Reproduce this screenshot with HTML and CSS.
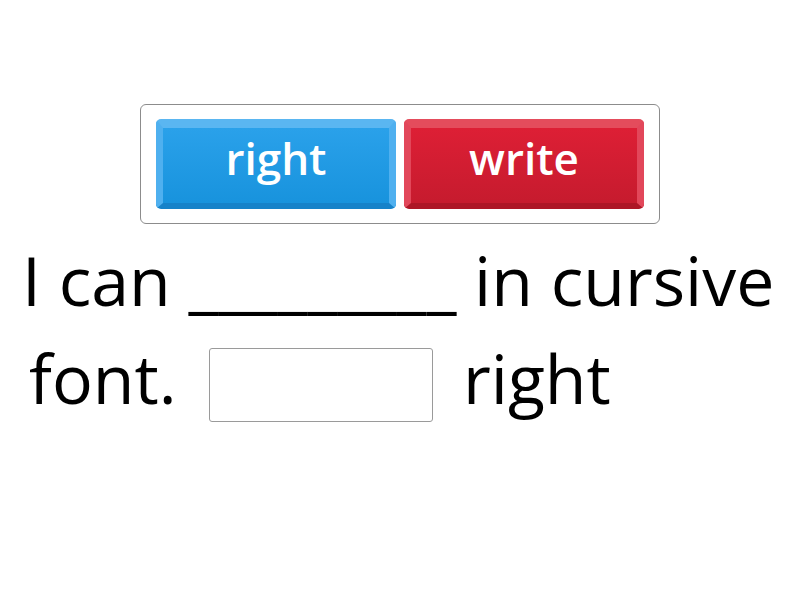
FILE: index.html
```html
<!DOCTYPE html>
<html>
<head>
<meta charset="utf-8">
<link rel="stylesheet" href="styles.css">
</head>
<body>
<div class="page">
  <div class="choices">
    <div class="choice blue">right</div>
    <div class="choice red">write</div>
  </div>
  <div class="sentence">
    <div class="line">I can <span class="blank">_________</span> in cursive</div>
    <div class="line line-second">font. <span class="slot"></span> right</div>
  </div>
</div>
</body>
</html>
```

FILE: styles.css
```css
html, body {
  margin: 0;
  padding: 0;
  background: #fff;
}
body {
  font-family: "Open Sans", sans-serif;
  width: 800px;
  height: 600px;
  overflow: hidden;
}
.page {
  display: flex;
  flex-direction: column;
  align-items: stretch;
  padding-top: 104px;
}
.choices {
  align-self: center;
  box-sizing: border-box;
  width: 520px;
  height: 120px;
  border: 1px solid #8c8c8c;
  border-radius: 6px;
  padding: 14px 15px;
  display: flex;
  gap: 8px;
}
.choice {
  box-sizing: border-box;
  width: 240px;
  height: 90px;
  border-radius: 5px;
  color: #fff;
  font-weight: 600;
  font-size: 44px;
  font-stretch: 95%;
  display: flex;
  align-items: center;
  justify-content: center;
  border-style: solid;
  border-width: 9px 7px 6px 7px;
  line-height: 1;
  padding-bottom: 16px;
}
.blue {
  background: linear-gradient(#2aa1ea, #1893dd);
  border-color: #5ab6f1 #4fb0ef #1682c9 #4fb0ef;
}
.red {
  background: linear-gradient(#dd1f35, #c61b2e);
  border-color: #e44c5c #e2475a #ad1626 #e2475a;
}
.sentence {
  padding-left: 22px;
  padding-top: 7px;
  font-size: 68px;
  color: #000;
  font-stretch: 95%;
}
.line {
  height: 98px;
  line-height: 98px;
  white-space: nowrap;
}
.line-second {
  padding-left: 7px;
}
.blank {
  font-stretch: 100%;
}
.slot {
  display: inline-block;
  box-sizing: border-box;
  width: 224px;
  height: 74px;
  border: 1px solid #9a9a9a;
  border-radius: 3px;
  vertical-align: -18px;
  margin: 0 12px 0 15px;
}
```
